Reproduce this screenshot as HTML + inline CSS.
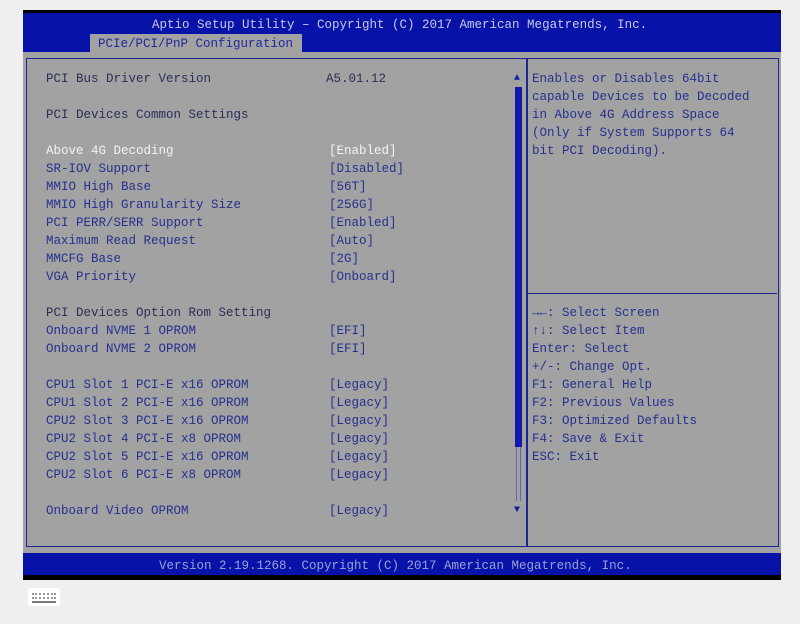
<!DOCTYPE html>
<html><head><style>
body{margin:0;width:800px;height:623px;background:#efefef;position:relative;overflow:hidden;font-family:"Liberation Mono",monospace;font-size:12.5px}
.a{position:absolute;white-space:pre;line-height:18px}
.t{position:absolute;left:0;top:1px;width:800px;height:623px}
.b{color:#25308f}.h{color:#2c2f55}.w{color:#f4f4f4}
</style></head><body>
<div class="a" style="left:23px;top:10px;width:758px;height:570px;background:#000"></div>
<div class="a" style="left:23px;top:13px;width:758px;height:40px;background:#0712a8"></div>
<div class="a" style="left:23px;top:52px;width:758px;height:501px;background:#a2a2a2"></div>
<div class="a" style="left:23px;top:553px;width:758px;height:22px;background:#0712a8"></div>
<div class="a" style="left:90px;top:34px;width:212px;height:18px;background:#a2a2a2"></div>
<div class="a" style="left:26px;top:58px;width:751px;height:487px;border:1px solid #1c2690"></div>
<div class="a" style="left:526px;top:58px;width:2px;height:489px;background:#1c2690"></div>
<div class="a" style="left:528px;top:293px;width:249px;height:1px;background:#1c2690"></div>
<div class="a" style="left:515px;top:87px;width:7px;height:360px;background:#0f1aa8"></div>
<div class="a" style="left:516px;top:447px;width:5px;height:54px;border-left:1px solid #6068b0;border-right:1px solid #6068b0;box-sizing:border-box"></div>
<div class="a" style="left:514px;top:70px;color:#0f1aa8;font-size:10px">▲</div>
<div class="a" style="left:514px;top:502px;color:#0f1aa8;font-size:10px">▼</div>
<div class="t">
<div class="a" style="left:152px;top:15px;color:#c8c8e8">Aptio Setup Utility – Copyright (C) 2017 American Megatrends, Inc.</div>
<div class="a" style="left:98px;top:34px;color:#1f2a9a">PCIe/PCI/PnP Configuration</div>
<div class="a h" style="left:46px;top:69px">PCI Bus Driver Version</div>
<div class="a h" style="left:326px;top:69px">A5.01.12</div>
<div class="a h" style="left:46px;top:105px">PCI Devices Common Settings</div>
<div class="a w" style="left:46px;top:141px">Above 4G Decoding</div><div class="a w" style="left:329px;top:141px">[Enabled]</div>
<div class="a b" style="left:46px;top:159px">SR-IOV Support
MMIO High Base
MMIO High Granularity Size
PCI PERR/SERR Support
Maximum Read Request
MMCFG Base
VGA Priority</div>
<div class="a b" style="left:329px;top:159px">[Disabled]
[56T]
[256G]
[Enabled]
[Auto]
[2G]
[Onboard]</div>
<div class="a h" style="left:46px;top:303px">PCI Devices Option Rom Setting</div>
<div class="a b" style="left:46px;top:321px">Onboard NVME 1 OPROM
Onboard NVME 2 OPROM

CPU1 Slot 1 PCI-E x16 OPROM
CPU1 Slot 2 PCI-E x16 OPROM
CPU2 Slot 3 PCI-E x16 OPROM
CPU2 Slot 4 PCI-E x8 OPROM
CPU2 Slot 5 PCI-E x16 OPROM
CPU2 Slot 6 PCI-E x8 OPROM

Onboard Video OPROM</div>
<div class="a b" style="left:329px;top:321px">[EFI]
[EFI]

[Legacy]
[Legacy]
[Legacy]
[Legacy]
[Legacy]
[Legacy]

[Legacy]</div>
<div class="a b" style="left:532px;top:69px">Enables or Disables 64bit
capable Devices to be Decoded
in Above 4G Address Space
(Only if System Supports 64
bit PCI Decoding).</div>
<div class="a b" style="left:532px;top:303px">→←: Select Screen
↑↓: Select Item
Enter: Select
+/-: Change Opt.
F1: General Help
F2: Previous Values
F3: Optimized Defaults
F4: Save &amp; Exit
ESC: Exit</div>
<div class="a" style="left:159px;top:556px;color:#9da0d8">Version 2.19.1268. Copyright (C) 2017 American Megatrends, Inc.</div>
</div>
<div class="a" style="left:28px;top:588px;width:32px;height:18px;background:#fff;border-radius:3px"></div>
<div class="a" style="left:32px;top:593px;width:24px;height:6px;border-top:2px dotted #999;border-bottom:2px dotted #999;box-sizing:border-box"></div>
<div class="a" style="left:32px;top:601px;width:24px;height:2px;background:#777"></div>
</body></html>
